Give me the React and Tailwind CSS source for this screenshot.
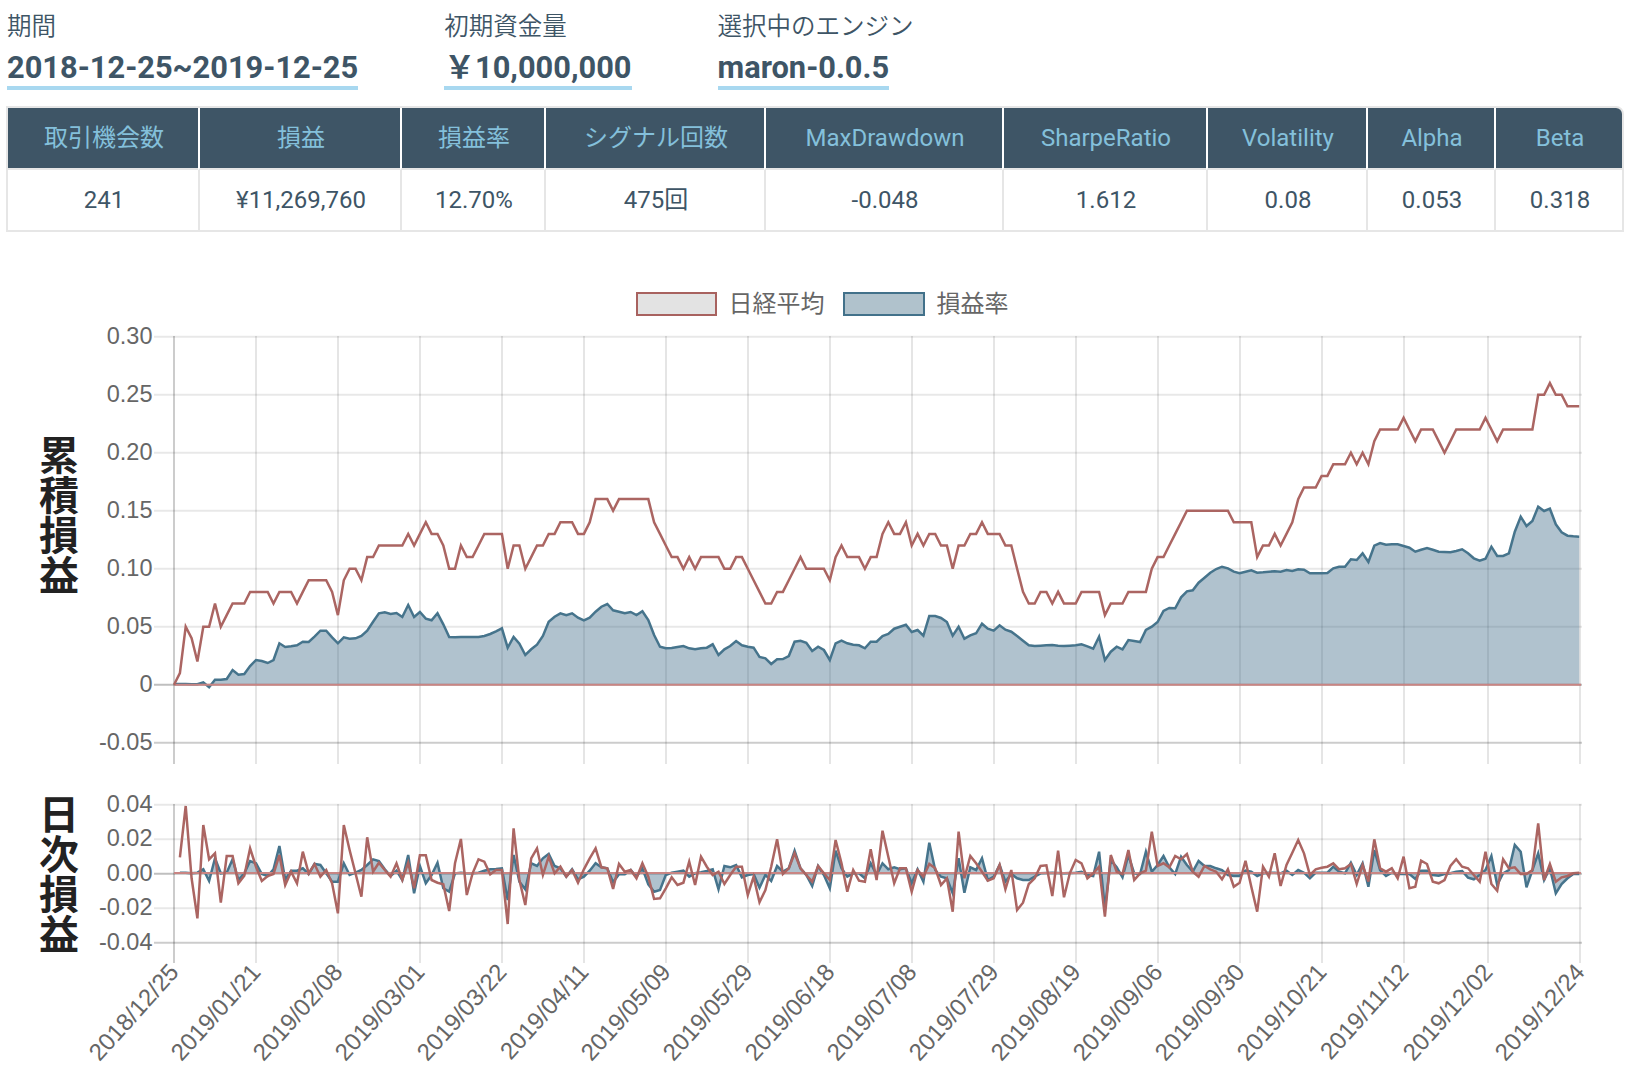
import React from 'react';

const stats = [
  { head: '取引機会数', value: '241', w: 'w-[190px]' },
  { head: '損益', value: '¥11,269,760', w: 'w-[202px]' },
  { head: '損益率', value: '12.70%', w: 'w-[144px]' },
  { head: 'シグナル回数', value: '475回', w: 'w-[220px]' },
  { head: 'MaxDrawdown', value: '-0.048', w: 'w-[238px]' },
  { head: 'SharpeRatio', value: '1.612', w: 'w-[204px]' },
  { head: 'Volatility', value: '0.08', w: 'w-[160px]' },
  { head: 'Alpha', value: '0.053', w: 'w-[128px]' },
  { head: 'Beta', value: '0.318', w: 'w-[128px]' },
];

const summary = [
  { label: '期間', value: '2018-12-25~2019-12-25' },
  { label: '初期資金量', value: '￥10,000,000' },
  { label: '選択中のエンジン', value: 'maron-0.0.5' },
];

// nikkei cumulative, in hundredths
const nikkeiTotal = [
  0, 1, 5, 4, 2, 5, 5, 7, 5, 6, 7, 7, 7, 8, 8, 8, 8, 7, 8, 8, 8, 7, 8, 9, 9, 9, 9, 8, 6, 9,
  10, 10, 9, 11, 11, 12, 12, 12, 12, 12, 13, 12, 13, 14, 13, 13, 12, 10, 10, 12, 11, 11, 12, 13, 13, 13, 13, 10, 12, 12,
  10, 11, 12, 12, 13, 13, 14, 14, 14, 13, 13, 14, 16, 16, 16, 15, 16, 16, 16, 16, 16, 16, 14, 13, 12, 11, 11, 10, 11, 10,
  11, 11, 11, 11, 10, 10, 11, 11, 10, 9, 8, 7, 7, 8, 8, 9, 10, 11, 10, 10, 10, 10, 9, 11, 12, 11, 11, 11, 10, 11,
  11, 13, 14, 13, 13, 14, 12, 13, 12, 13, 13, 12, 12, 10, 12, 12, 13, 13, 14, 13, 13, 13, 12, 12, 10, 8, 7, 7, 8, 8,
  7, 8, 7, 7, 7, 8, 8, 8, 8, 6, 7, 7, 7, 8, 8, 8, 8, 10, 11, 11, 12, 13, 14, 15, 15, 15, 15, 15, 15, 15,
  15, 14, 14, 14, 14, 11, 12, 12, 13, 12, 13, 14, 16, 17, 17, 17, 18, 18, 19, 19, 19, 20, 19, 20, 19, 21, 22, 22, 22, 22,
  23, 22, 21, 22, 22, 22, 21, 20, 21, 22, 22, 22, 22, 22, 23, 22, 21, 22, 22, 22, 22, 22, 22, 25, 25, 26, 25, 25, 24, 24,
  24,
];

// traced curves, 1/3 px from the top of the chart area
const profitTotal = [
  1212, 1212, 1212, 1213, 1213, 1207, 1222, 1199, 1199, 1197, 1170, 1184, 1182, 1158, 1140, 1143, 1149, 1140, 1090, 1101,
  1099, 1096, 1085, 1086, 1070, 1052, 1052, 1072, 1090, 1072, 1076, 1075, 1068, 1052, 1025, 1000, 997, 1002, 999, 1011,
  975, 1011, 996, 1016, 1021, 1000, 1033, 1071, 1072, 1071, 1071, 1071, 1071, 1068, 1062, 1054, 1045, 1103, 1071, 1091,
  1125, 1108, 1094, 1068, 1025, 1010, 1000, 1006, 1000, 1013, 1021, 1013, 995, 980, 972, 991, 995, 1000, 996, 1005,
  994, 1020, 1065, 1100, 1105, 1104, 1101, 1098, 1105, 1108, 1105, 1103, 1093, 1125, 1108, 1098, 1083, 1096, 1100, 1103,
  1131, 1135, 1152, 1138, 1137, 1128, 1085, 1082, 1088, 1113, 1100, 1110, 1140, 1090, 1082, 1090, 1094, 1096, 1105, 1085,
  1085, 1068, 1062, 1046, 1040, 1034, 1056, 1050, 1067, 1008, 1008, 1014, 1026, 1067, 1040, 1076, 1066, 1060, 1031, 1046,
  1052, 1036, 1049, 1055, 1068, 1082, 1096, 1098, 1097, 1096, 1095, 1097, 1098, 1097, 1096, 1093, 1099, 1106, 1070, 1140,
  1115, 1100, 1108, 1080, 1083, 1086, 1050, 1040, 1026, 993, 984, 985, 952, 934, 931, 908, 893, 878, 867, 860,
  865, 875, 880, 875, 871, 878, 877, 875, 874, 875, 870, 873, 868, 869, 880, 880, 880, 879, 865, 860,
  860, 838, 840, 820, 846, 797, 789, 794, 793, 793, 798, 803, 815, 809, 804, 809, 815, 816, 817, 813,
  808, 820, 835, 842, 836, 800, 828, 828, 820, 755, 710, 738, 723, 680, 693, 686, 733, 757, 767, 769,
  770,
];

const nikkeiDaily = [
  232, 78, 295, 415, 135, 238, 220, 368, 228, 228, 310, 287, 205, 260, 303, 288, 282, 225, 315, 275,
  310, 215, 280, 252, 290, 270, 310, 400, 135, 210, 280, 350, 172, 275, 248, 270, 290, 250, 300, 248,
  325, 226, 226, 300, 308, 313, 393, 250, 177, 345, 280, 238, 245, 283, 270, 270, 432, 145, 300, 375,
  235, 205, 285, 230, 280, 260, 290, 270, 308, 268, 235, 205, 262, 265, 327, 252, 275, 270, 295, 250,
  290, 357, 355, 325, 292, 315, 308, 245, 315, 230, 260, 285, 275, 312, 285, 260, 260, 345, 290, 367,
  330, 260, 178, 282, 265, 220, 265, 285, 305, 258, 280, 300, 180, 250, 335, 270, 302, 305, 208, 300,
  152, 230, 310, 265, 265, 335, 270, 290, 252, 265, 315, 295, 395, 155, 295, 228, 250, 275, 302, 295,
  255, 328, 270, 390, 368, 312, 295, 258, 256, 348, 212, 352, 280, 240, 250, 295, 280, 260, 410, 225,
  275, 282, 210, 300, 280, 272, 155, 258, 250, 262, 228, 238, 222, 275, 290, 258, 268, 275, 298, 268,
  320, 308, 242, 320, 395, 260, 290, 220, 318, 255, 218, 180, 220, 285, 268, 263, 260, 250, 268, 265,
  252, 312, 255, 305, 178, 265, 275, 265, 295, 230, 325, 320, 242, 252, 305, 310, 300, 258, 238, 260,
  265, 285, 305, 215, 312, 332, 238, 265, 262, 282, 282, 270, 130, 300, 252, 305, 292, 288, 280, 278,
];

const profitDaily = [
  278, 278, 280, 278, 268, 303, 235, 280, 278, 238, 300, 280, 243, 250, 282, 288, 268, 198, 300, 272,
  272, 265, 282, 252, 255, 280, 305, 305, 250, 285, 278, 270, 255, 238, 243, 268, 288, 272, 300, 225,
  340, 258, 310, 285, 248, 325, 335, 280, 278, 280, 280, 278, 272, 268, 267, 265, 360, 225, 305, 328,
  250, 258, 235, 222, 258, 265, 290, 268, 298, 290, 272, 250, 262, 265, 307, 283, 283, 270, 290, 265,
  313, 335, 330, 285, 278, 275, 272, 290, 280, 277, 273, 268, 328, 258, 262, 255, 292, 285, 282, 323,
  285, 303, 258, 275, 265, 212, 265, 285, 318, 258, 285, 325, 212, 265, 290, 280, 280, 295, 250, 285,
  250, 268, 262, 268, 265, 310, 268, 305, 188, 270, 290, 295, 340, 235, 338, 262, 270, 235, 300, 290,
  255, 305, 282, 295, 300, 300, 290, 280, 279, 278, 279, 280, 279, 278, 275, 285, 288, 215, 385, 240,
  262, 292, 225, 280, 282, 215, 275, 255, 228, 262, 282, 230, 255, 275, 243, 258, 258, 265, 270, 285,
  288, 288, 272, 275, 288, 280, 278, 278, 280, 272, 285, 270, 278, 295, 278, 278, 278, 260, 275, 280,
  248, 285, 250, 320, 210, 270, 288, 278, 282, 282, 282, 297, 272, 272, 285, 287, 282, 280, 275, 273,
  293, 298, 285, 270, 228, 315, 280, 270, 195, 215, 322, 270, 220, 300, 265, 340, 312, 295, 282, 282,
];

const xTicks = [
  [174, '2018/12/25'], [256, '2019/01/21'], [338, '2019/02/08'], [420, '2019/03/01'], [502, '2019/03/22'],
  [584, '2019/04/11'], [666, '2019/05/09'], [748, '2019/05/29'], [830, '2019/06/18'], [912, '2019/07/08'],
  [994, '2019/07/29'], [1076, '2019/08/19'], [1158, '2019/09/06'], [1240, '2019/09/30'], [1322, '2019/10/21'],
  [1404, '2019/11/12'], [1488, '2019/12/02'], [1580, '2019/12/24'],
];

const RED = '#ab6562';
const BLUE = '#46748c';
const FILL = 'rgba(63,108,135,0.41)';
const xAt = (i) => 174 + i * 5.855;
const toPoints = (list, startIndex, toY) =>
  list.map((v, i) => `${xAt(i + startIndex).toFixed(1)},${toY(v).toFixed(1)}`).join(' ');

const Grid = ({ rows, top, bottom, zero }) => (
  <g strokeWidth="2" fill="none">
    {xTicks.map(([x], i) => (
      <line key={x} x1={x} x2={x} y1={top} y2={bottom} stroke={i === 0 ? 'rgba(0,0,0,0.2)' : 'rgba(0,0,0,0.1)'} />
    ))}
    {rows.map(([y, label], i) => (
      <line
        key={label}
        x1="154"
        x2="1582"
        y1={y}
        y2={y}
        stroke={y === zero ? 'rgba(0,0,0,0.25)' : i === rows.length - 1 ? 'rgba(0,0,0,0.2)' : 'rgba(0,0,0,0.09)'}
      />
    ))}
    {rows.map(([y, label]) => (
      <text
        key={label}
        x="152.5"
        y={y + 7}
        textAnchor="end"
        stroke="none"
        className="fill-[#666666] text-[23.5px] font-['Liberation_Sans',sans-serif]"
      >
        {label}
      </text>
    ))}
  </g>
);

const AxisTitle = ({ children, top }) => (
  <div className={`w-[100px] shrink-0 pl-[39px] ${top}`}>
    <div className="text-[40px] leading-[40px] font-bold text-[#222222] font-['Noto_Sans_CJK_JP',sans-serif] [writing-mode:vertical-rl]">
      {children}
    </div>
  </div>
);

const TotalChart = () => {
  const zero = 684.7;
  const rows = [
    [336.7, '0.30'], [394.7, '0.25'], [452.7, '0.20'], [510.7, '0.15'],
    [568.7, '0.10'], [626.7, '0.05'], [zero, '0'], [742.7, '-0.05'],
  ];
  const profitY = (z) => 280 + z / 3;
  return (
    <svg width="1526" height="445" viewBox="100 325 1526 445" className="block shrink-0 overflow-visible">
      <Grid rows={rows} top={336} bottom={764} zero={zero} />
      <polygon points={`${xAt(0)},${zero} ${toPoints(profitTotal, 0, profitY)} ${xAt(240)},${zero}`} fill={FILL} />
      <polyline points={toPoints(profitTotal, 0, profitY)} fill="none" stroke={BLUE} strokeWidth="2.5" />
      <line x1="174" x2="1581" y1={zero} y2={zero} stroke="#c98583" strokeWidth="2" />
      <polyline points={toPoints(nikkeiTotal, 0, (v) => zero - v * 11.6)} fill="none" stroke={RED} strokeWidth="2.5" />
    </svg>
  );
};

const DailyChart = () => {
  const zero = 873.7;
  const rows = [[804.7, '0.04'], [839.2, '0.02'], [zero, '0.00'], [908.2, '-0.02'], [942.7, '-0.04']];
  const dailyY = (z) => 780 + z / 3;
  return (
    <svg width="1526" height="300" viewBox="100 770 1526 300" className="block shrink-0 overflow-visible">
      <Grid rows={rows} top={804} bottom={963} zero={zero} />
      <polygon points={`${xAt(1)},${zero} ${toPoints(profitDaily, 1, dailyY)} ${xAt(240)},${zero}`} fill={FILL} />
      <polyline points={toPoints(profitDaily, 1, dailyY)} fill="none" stroke={BLUE} strokeWidth="2.5" />
      <line x1="174" x2="1581" y1="873" y2="873" stroke="#c98583" strokeWidth="2" />
      <polyline points={toPoints(nikkeiDaily, 1, dailyY)} fill="none" stroke={RED} strokeWidth="2.5" />
      {xTicks.map(([x, label]) => (
        <text
          key={label}
          x={x + 6}
          y="973"
          textAnchor="end"
          transform={`rotate(-48 ${x + 6} 973)`}
          className="fill-[#666666] text-[24px] font-['Liberation_Sans',sans-serif]"
        >
          {label}
        </text>
      ))}
    </svg>
  );
};

const App = () => {
  return (
    <div className="w-[1626px] h-[1070px] overflow-hidden bg-white text-[#3e5566] font-['Roboto','Noto_Sans_CJK_JP',sans-serif]">
      <div className="flex gap-[86px] pt-[12px] pl-[7px]">
        {summary.map((item) => (
          <div key={item.label}>
            <div className="text-[24.5px] leading-[30px] font-[350]">{item.label}</div>
            <div className="mt-[7px] inline-block border-b-4 border-[#a8d8f0] text-[30.8px] leading-[37px] font-bold whitespace-nowrap">
              {item.value}
            </div>
          </div>
        ))}
      </div>

      <div className="mt-[16px] ml-[6px] w-[1618px] rounded-tr-[8px] border-2 border-[#e6e6e6]">
        <table className="w-[1614px] table-fixed border-separate border-spacing-0">
          <thead>
            <tr>
              {stats.map((s, index) => (
                <th
                  key={s.head}
                  className={`${s.w} h-[62px] border-b-2 border-b-[#e6e6e6] bg-[#3e5566] pl-[2px] text-center text-[24px] font-normal text-[#84c0db] ${
                    index > 0 ? 'border-l-2 border-l-white' : ''
                  } ${index === stats.length - 1 ? 'rounded-tr-[6px]' : ''}`}
                >
                  {s.head}
                </th>
              ))}
            </tr>
          </thead>
          <tbody>
            <tr>
              {stats.map((s, index) => (
                <td
                  key={s.head}
                  className={`h-[60px] pl-[2px] text-center text-[24px] font-normal ${
                    index > 0 ? 'border-l-2 border-l-[#e6e6e6]' : ''
                  }`}
                >
                  {s.value}
                </td>
              ))}
            </tr>
          </tbody>
        </table>
      </div>

      <div className="mt-[60px] flex h-[24px] items-center justify-center pl-[18px] text-[24px] text-[#666666] font-['Noto_Sans_CJK_JP',sans-serif]">
        <span className="h-[24px] w-[81px] border-2 border-[#a8625f] bg-[#e3e3e3]"></span>
        <span className="ml-[12px] pb-[4px]">日経平均</span>
        <span className="ml-[18px] h-[24px] w-[82px] border-2 border-[#42718a] bg-[#b0c2cc]"></span>
        <span className="ml-[12px] pb-[4px]">損益率</span>
      </div>

      <div className="mt-[9px] flex">
        <AxisTitle top="mt-[110px]">累積損益</AxisTitle>
        <TotalChart />
      </div>
      <div className="flex">
        <AxisTitle top="mt-[24px]">日次損益</AxisTitle>
        <DailyChart />
      </div>
    </div>
  );
};

export default App;
